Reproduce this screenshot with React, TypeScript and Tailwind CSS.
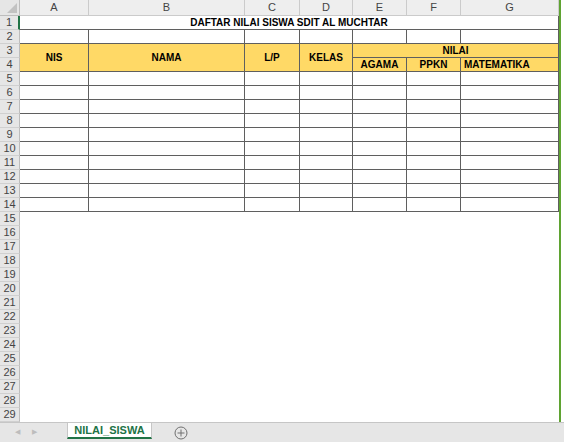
import React from 'react';

const cols = ['A', 'B', 'C', 'D', 'E', 'F', 'G'];
const dataRows = [5, 6, 7, 8, 9, 10, 11, 12, 13, 14];
const emptyRows = Array.from({ length: 15 }, (_, i) => i + 15);

const RowHead = ({ n, active }: { n: number; active?: boolean }) => (
  <div
    className={
      'flex items-center justify-center bg-[#e6e6e6] text-[11px] leading-none text-[#444] border-b border-[#d0d0d0] ' +
      (active ? 'border-r-2 border-r-[#217346] bg-[#d8d8d8]' : 'border-r border-r-[#bdbdbd]')
    }
  >
    {n}
  </div>
);

const App = () => {
  return (
    <div className="w-[564px] h-[442px] flex flex-col bg-white overflow-hidden font-['Liberation_Sans',Arial,sans-serif]">
      <div className="flex h-[422px]">
        <div className="grid w-[559px] grid-cols-[20px_69px_156px_55px_53px_54px_54px_98px] grid-rows-[16px_repeat(29,14px)]">
          {/* corner */}
          <div className="relative bg-[#e6e6e6] border-r border-b border-[#bdbdbd]">
            <div className="absolute right-[2px] bottom-[2px] w-0 h-0 border-l-[10px] border-l-transparent border-b-[10px] border-b-[#c2c2c2]" />
          </div>
          {cols.map((c) => (
            <div
              key={c}
              className="flex items-center justify-center bg-[#eeeeee] text-[11px] leading-none text-[#444] border-r border-b border-[#cbcbcb]"
            >
              {c}
            </div>
          ))}

          {/* row 1 */}
          <RowHead n={1} active />
          <div className="col-span-7 flex items-center justify-center text-[10px] font-bold text-black border-b border-r border-[#5f5f5f]">
            DAFTAR NILAI SISWA SDIT AL MUCHTAR
          </div>

          {/* row 2 */}
          <RowHead n={2} />
          {cols.map((c) => (
            <div key={'r2' + c} className="border-r border-b border-[#5f5f5f]" />
          ))}

          {/* rows 3-4 header */}
          <RowHead n={3} />
          {['NIS', 'NAMA', 'L/P', 'KELAS'].map((t) => (
            <div
              key={t}
              className="row-span-2 flex items-center justify-center bg-[#ffd966] text-[10px] font-bold text-black border-r border-b border-[#5f5f5f]"
            >
              {t}
            </div>
          ))}
          <div className="col-span-3 flex items-center justify-center bg-[#ffd966] text-[10px] font-bold text-black border-r border-b border-[#5f5f5f]">
            NILAI
          </div>
          <RowHead n={4} />
          <div className="flex items-center justify-center bg-[#ffd966] text-[10px] font-bold text-black border-r border-b border-[#5f5f5f]">
            AGAMA
          </div>
          <div className="flex items-center justify-center bg-[#ffd966] text-[10px] font-bold text-black border-r border-b border-[#5f5f5f]">
            PPKN
          </div>
          <div className="flex items-center pl-[3px] bg-[#ffd966] text-[10px] font-bold text-black border-r border-b border-[#5f5f5f]">
            MATEMATIKA
          </div>

          {/* data rows */}
          {dataRows.map((r) => (
            <React.Fragment key={r}>
              <RowHead n={r} />
              {cols.map((c) => (
                <div key={r + c} className="border-r border-b border-[#5f5f5f]" />
              ))}
            </React.Fragment>
          ))}

          {/* empty rows */}
          {emptyRows.map((r) => (
            <React.Fragment key={r}>
              <RowHead n={r} />
              <div className="col-span-7" />
            </React.Fragment>
          ))}
        </div>
        <div className="w-[2px] bg-[#5fa332]" />
        <div className="flex-1 bg-white" />
      </div>

      {/* sheet tabs */}
      <div className="h-[20px] flex items-stretch bg-[#e6e6e6] border-t border-[#c6c6c6]">
        <div className="w-[67px] flex items-center gap-[12px] pl-[15px] text-[7px] text-[#bdbdbd]">
          <span>◀</span>
          <span>▶</span>
        </div>
        <div className="w-[85px] h-[16px] flex items-center justify-center bg-white border-l border-r border-[#c6c6c6] border-b-2 border-b-[#217346] text-[11px] font-bold text-[#217346]">
          NILAI_SISWA
        </div>
        <div className="flex items-center pl-[22px]">
          <svg width="14" height="14" viewBox="0 0 14 14">
            <circle cx="7" cy="7" r="6" fill="none" stroke="#707070" strokeWidth="1" />
            <path d="M7 3.5v7M3.5 7h7" stroke="#707070" strokeWidth="1" />
          </svg>
        </div>
      </div>
    </div>
  );
};

export default App;
